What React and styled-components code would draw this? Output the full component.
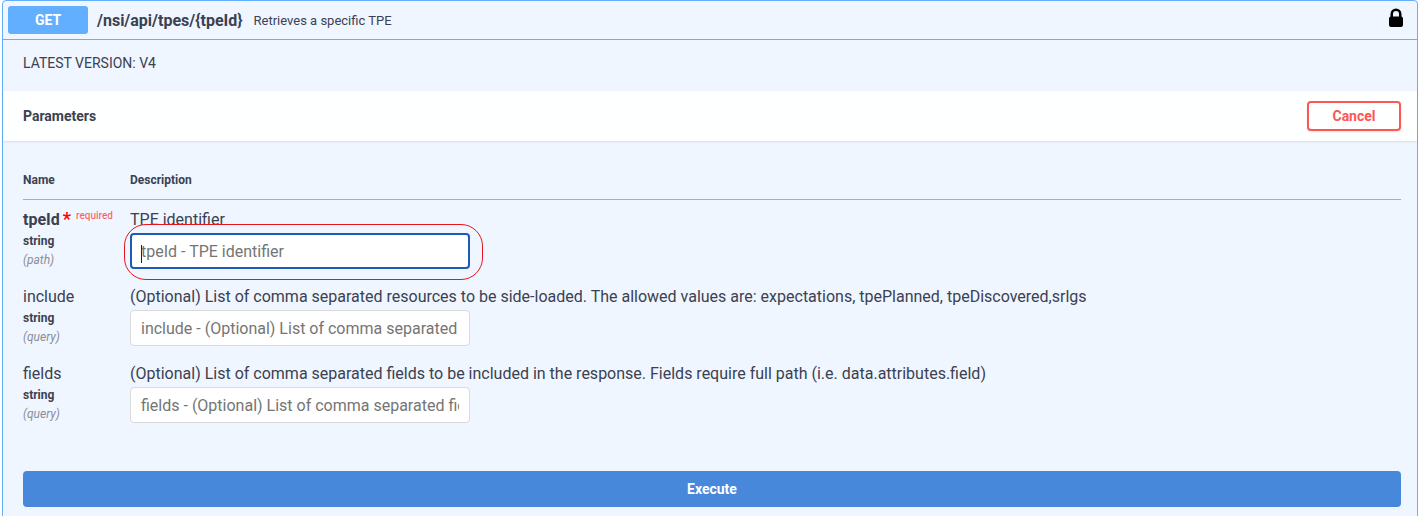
import React from "react";
import styled, { createGlobalStyle } from "styled-components";

const GlobalStyle = createGlobalStyle`
	html, body {
		margin: 0;
		padding: 0;
		background: #fff;
		font-family: Roboto, "Liberation Sans", sans-serif;
		color: #3b4151;
	}
`;

const Page = styled.div`
	width: 1418px;
	height: 516px;
	overflow: hidden;
	padding-left: 2px;
	box-sizing: border-box;
`;

const Opblock = styled.div`
	width: 1416px;
	height: 530px;
	box-sizing: border-box;
	border: 1px solid #61affe;
	border-radius: 4px;
	background: #eff6ff;
`;

const Summary = styled.div`
	display: flex;
	align-items: center;
	height: 39px;
	box-sizing: border-box;
	padding: 0 5px;
	border-bottom: 1px solid #61affe;
`;

const Method = styled.div`
	width: 80px;
	height: 28px;
	display: flex;
	align-items: center;
	justify-content: center;
	border-radius: 3px;
	background: #61affe;
	color: #fff;
	font-size: 14px;
	font-weight: 700;
`;

const Path = styled.span`
	margin-left: 9px;
	font-size: 16px;
	font-weight: 700;
`;

const Summ = styled.span`
	margin-left: 11px;
	font-size: 13px;
	flex: 1;
`;

const Lock = styled.svg`
	width: 16px;
	height: 20px;
	margin-right: 8px;
	margin-top: -5px;
`;

const Version = styled.div`
	height: 51px;
	box-sizing: border-box;
	padding: 14px 20px 0;
	font-size: 14px;
	line-height: 18px;
`;

const SectionHeader = styled.div`
	display: flex;
	align-items: center;
	justify-content: space-between;
	height: 50px;
	box-sizing: border-box;
	padding: 0 16px 0 20px;
	background: rgba(255, 255, 255, 0.92);
	box-shadow: 0 1px 2px rgba(0, 0, 0, 0.1);
`;

const SectionTitle = styled.h4`
	margin: 0;
	font-size: 14px;
	font-weight: 700;
`;

const CancelButton = styled.button`
	width: 94px;
	height: 30px;
	padding: 0;
	border: 2px solid #ff5555;
	border-radius: 4px;
	background: transparent;
	color: #ff5555;
	font-family: inherit;
	font-size: 14px;
	font-weight: 700;
	box-shadow: 0 1px 2px rgba(0, 0, 0, 0.1);
`;

const Params = styled.div`
	padding: 30px 16px 0 20px;
`;

const TableHead = styled.div`
	display: flex;
	height: 27px;
	padding-top: 1px;
	border-bottom: 1px solid rgba(59, 65, 81, 0.4);
	font-size: 12px;
	font-weight: 700;
	line-height: 16px;
`;

const NameHead = styled.div`
	width: 107px;
`;

const Row = styled.div`
	display: flex;
	height: ${props => props.$height}px;
	padding-top: ${props => props.$top}px;
	box-sizing: border-box;
`;

const NameCell = styled.div`
	width: 107px;
	flex: none;
`;

const ParamName = styled.div`
	position: relative;
	font-size: 16px;
	line-height: 20px;
	font-weight: ${props => (props.$required ? 700 : 400)};
`;

const Star = styled.span`
	color: #ff0000;
	font-size: 18px;
	line-height: 0;
	margin-left: 3px;
`;

const Required = styled.span`
	position: absolute;
	left: 53px;
	top: -4px;
	color: rgba(255, 0, 0, 0.6);
	font-size: 10px;
	font-weight: 500;
`;

const ParamType = styled.div`
	margin-top: 3px;
	font-size: 12px;
	line-height: 16px;
	font-weight: 700;
`;

const ParamIn = styled.div`
	margin-top: 3px;
	font-size: 12px;
	line-height: 16px;
	font-style: italic;
	color: #8b8e98;
`;

const DescCell = styled.div`
	position: relative;
	flex: 1;
`;

const DescText = styled.div`
	font-size: 16px;
	line-height: 20px;
`;

const TextInput = styled.input`
	display: block;
	width: 340px;
	height: 36px;
	margin-top: 3px;
	box-sizing: border-box;
	padding: 8px 10px;
	border: ${props => (props.$active ? "2px solid #1b5cb8" : "1px solid #d9d9d9")};
	padding-left: ${props => (props.$active ? "9px" : "10px")};
	border-radius: 4px;
	background: #fff;
	font-family: inherit;
	font-size: 16px;
	outline: none;

	&::placeholder {
		color: #757575;
		opacity: 1;
	}
`;

const Caret = styled.span`
	position: absolute;
	left: 11px;
	top: 35px;
	width: 1px;
	height: 18px;
	background: #222;
`;

const Highlight = styled.span`
	position: absolute;
	left: -6px;
	top: 14px;
	width: 359px;
	height: 56px;
	box-sizing: border-box;
	border: 1px solid #e8141c;
	border-radius: 22px;
	pointer-events: none;
`;

const Execute = styled.button`
	display: block;
	width: 1378px;
	height: 36px;
	margin: 30px 0 0 20px;
	border: 0;
	border-radius: 4px;
	background: #4788db;
	color: #fff;
	font-family: inherit;
	font-size: 14px;
	font-weight: 700;
`;

const App = () => (
	<Page>
		<GlobalStyle />
		<Opblock>
			<Summary>
				<Method>GET</Method>
				<Path>/nsi/api/tpes/&#123;tpeId&#125;</Path>
				<Summ>Retrieves a specific TPE</Summ>
				<Lock viewBox="0 0 16 20">
					<path d="M13.5 8.5V6A5.500 5.500 0 0 0 2.500 6v2.500A2 2 0 0 0 1 10.400V17a2 2 0 0 0 2 2h10a2 2 0 0 0 2-2v-6.600a2 2 0 0 0-1.500-1.900zM5 6a3 3 0 0 1 6 0v2.400H5z" fill="#000" />
				</Lock>
			</Summary>
			<Version>LATEST VERSION: V4</Version>
			<SectionHeader>
				<SectionTitle>Parameters</SectionTitle>
				<CancelButton>Cancel</CancelButton>
			</SectionHeader>
			<Params>
				<TableHead>
					<NameHead>Name</NameHead>
					<div>Description</div>
				</TableHead>
				<Row $height={87} $top={10}>
					<NameCell>
						<ParamName $required>
							tpeId<Star>*</Star>
							<Required>required</Required>
						</ParamName>
						<ParamType>string</ParamType>
						<ParamIn>(path)</ParamIn>
					</NameCell>
					<DescCell>
						<DescText>TPE identifier</DescText>
						<TextInput $active placeholder="tpeId - TPE identifier" />
						<Caret />
						<Highlight />
					</DescCell>
				</Row>
				<Row $height={77} $top={0}>
					<NameCell>
						<ParamName>include</ParamName>
						<ParamType>string</ParamType>
						<ParamIn>(query)</ParamIn>
					</NameCell>
					<DescCell>
						<DescText>(Optional) List of comma separated resources to be side-loaded. The allowed values are: expectations, tpePlanned, tpeDiscovered,srlgs</DescText>
						<TextInput placeholder="include - (Optional) List of comma separated resources to be side-loaded." />
					</DescCell>
				</Row>
				<Row $height={77} $top={0}>
					<NameCell>
						<ParamName>fields</ParamName>
						<ParamType>string</ParamType>
						<ParamIn>(query)</ParamIn>
					</NameCell>
					<DescCell>
						<DescText>(Optional) List of comma separated fields to be included in the response. Fields require full path (i.e. data.attributes.field)</DescText>
						<TextInput placeholder="fields - (Optional) List of comma separated fields to be included in the response." />
					</DescCell>
				</Row>
			</Params>
			<Execute>Execute</Execute>
		</Opblock>
	</Page>
);

export default App;
